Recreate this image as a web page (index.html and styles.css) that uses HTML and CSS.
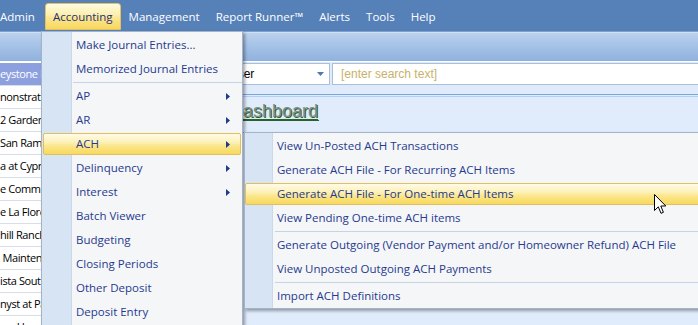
FILE: index.html
```html
<!DOCTYPE html>
<html>
<head>
<meta charset="utf-8">
<link rel="stylesheet" href="styles.css">
</head>
<body>
<div class="app">
  <nav class="menubar">
    <span class="mi first">Admin</span>
    <span class="mi active">Accounting</span>
    <span class="mi">Management</span>
    <span class="mi">Report Runner™</span>
    <span class="mi">Alerts</span>
    <span class="mi">Tools</span>
    <span class="mi">Help</span>
  </nav>
  <div class="band"></div>
  <div class="main">
    <aside class="list">
      <div class="row sel">eystone Isles</div>
      <div class="row">nonstration</div>
      <div class="row">2 Gardens</div>
      <div class="row">San Ramon</div>
      <div class="row">a at Cypress</div>
      <div class="row">e Community</div>
      <div class="row">e La Floresta</div>
      <div class="row">hill Ranch</div>
      <div class="row">&nbsp;Maintenance</div>
      <div class="row">ista South</div>
      <div class="row">nyst at Park</div>
      <div class="row">ow Homes</div>
    </aside>
    <section class="content">
      <div class="toolbar">
        <div class="combo"><span class="combo-text">User</span><svg class="combo-arrow" width="7" height="4" viewBox="0 0 7 4"><path d="M0 0H7L3.5 4Z"/></svg></div>
        <div class="search">[enter search text]</div>
      </div>
      <div class="dash"><span class="dash-title">Dashboard</span></div>
      <div class="body-area"></div>
    </section>
  </div>

  <div class="dropdown">
    <div class="item">Make Journal Entries...</div>
    <div class="item">Memorized Journal Entries</div>
    <div class="sep"></div>
    <div class="item">AP<svg class="arr" width="4" height="7" viewBox="0 0 4 7"><path d="M0 0L4 3.5L0 7Z"/></svg></div>
    <div class="item">AR<svg class="arr" width="4" height="7" viewBox="0 0 4 7"><path d="M0 0L4 3.5L0 7Z"/></svg></div>
    <div class="item hot">ACH<svg class="arr" width="4" height="7" viewBox="0 0 4 7"><path d="M0 0L4 3.5L0 7Z"/></svg></div>
    <div class="item">Delinquency<svg class="arr" width="4" height="7" viewBox="0 0 4 7"><path d="M0 0L4 3.5L0 7Z"/></svg></div>
    <div class="item">Interest<svg class="arr" width="4" height="7" viewBox="0 0 4 7"><path d="M0 0L4 3.5L0 7Z"/></svg></div>
    <div class="item">Batch Viewer</div>
    <div class="item">Budgeting</div>
    <div class="item">Closing Periods</div>
    <div class="item">Other Deposit</div>
    <div class="item">Deposit Entry</div>
  </div>

  <div class="submenu">
    <div class="item">View Un-Posted ACH Transactions</div>
    <div class="item">Generate ACH File - For Recurring ACH Items</div>
    <div class="item hot">Generate ACH File - For One-time ACH Items</div>
    <div class="item">View Pending One-time ACH items</div>
    <div class="sep"></div>
    <div class="item">Generate Outgoing (Vendor Payment and/or Homeowner Refund) ACH File</div>
    <div class="item">View Unposted Outgoing ACH Payments</div>
    <div class="sep"></div>
    <div class="item">Import ACH Definitions</div>
  </div>

  <svg class="cursor" width="13" height="21" viewBox="0 0 13 21"><path d="M0.5 0.5V16.5L4.3 12.8L7 19.3L9.4 18.3L6.8 12H11.8Z" fill="#fff" stroke="#000" stroke-width="1" stroke-linejoin="miter"/></svg>
</div>
</body>
</html>
```

FILE: styles.css
```css
* { box-sizing: border-box; }
html, body { margin: 0; padding: 0; }
body {
  width: 698px;
  height: 325px;
  overflow: hidden;
  font-family: "Open Sans", "Noto Sans", sans-serif;
  font-size: 11.5px;
  background: #e0ecfc;
}
.app {
  position: relative;
  width: 698px;
  height: 325px;
  overflow: hidden;
}
.menubar {
  height: 32px;
  background: #5680b8;
  display: flex;
  align-items: flex-start;
  border-bottom: 1px solid #7fa0cc;
}
.mi {
  margin-top: 3px;
  height: 27px;
  line-height: 25px;
  padding: 0 7px;
  color: #fff;
  border: 1px solid transparent;
  white-space: nowrap;
}
.mi.first { padding-left: 0; padding-right: 9px; border-left: 0; }
.mi.active {
  color: #1e2f7c;
  border-color: #e4c05e;
  border-radius: 3px 3px 0 0;
  background: linear-gradient(to bottom, #fefadf 0%, #fdf0b2 40%, #fae48a 60%, #f7d75c 100%);
}
.band {
  height: 28px;
  background: linear-gradient(to bottom, #bcd2ee 0%, #a8c4e8 40%, #92b3de 100%);
  border-top: 1px solid #cfe0f5;
}
.main {
  display: flex;
  height: 265px;
}
.list {
  width: 229px;
  flex: none;
  background: #fff;
  border-top: 1px solid #8eb2e0;
  padding-top: 2px;
}
.row {
  height: 23px;
  line-height: 22px;
  border-bottom: 1px solid #d8dee8;
  white-space: nowrap;
  overflow: hidden;
  color: #000;
  font-size: 11px;
  letter-spacing: -0.4px;
}
.row.sel { background: #8c9fdf; color: #fff; }
.content {
  flex: 1;
  display: flex;
  flex-direction: column;
  min-width: 0;
}
.toolbar {
  height: 34px;
  border-top: 1px solid #8eb2e0;
  background: linear-gradient(to bottom, #ffffff 0 1px, #dfeafa 1px);
  padding: 2px 0 0 1px;
  display: flex;
  gap: 2px;
}
.combo, .search {
  height: 22px;
  background: #fff;
  border: 1px solid #a9c0dc;
  font-family: "Liberation Sans", Arial, sans-serif;
  font-size: 12px;
  line-height: 20px;
}
.combo {
  width: 100px;
  flex: none;
  display: flex;
  align-items: center;
  padding-left: 0;
}
.combo-text { flex: 1; color: #000; margin-left: -2px; }
.combo-arrow { fill: #4f76b5; margin-right: 5px; }
.search {
  flex: 1;
  color: #c8b26a;
  padding-left: 8px;
  border-right: 0;
}
.dash {
  height: 38px;
  border-top: 1px solid #7aa6e0;
  background: linear-gradient(to bottom, #e0ecfc 0 1px, #b0d0f0 1px 2px, #e0ecfc 2px);
  padding: 5px 0 0 1px;
}
.dash-title {
  font-family: "Liberation Sans", Arial, sans-serif;
  font-size: 18px;
  line-height: 22px;
  color: #7f8f84;
  text-shadow: 1px 1px 0 #2e5e30;
  text-decoration: underline;
  text-decoration-color: #1e6a20;
  text-underline-offset: 2px;
}
.body-area {
  flex: 1;
  border-top: 1px solid #6fa0e0;
  background: #e0ecfc;
}

/* menus */
.dropdown, .submenu {
  position: absolute;
  display: flex;
  flex-direction: column;
  border: 1px solid #a3b4ca;
  box-shadow: 2px 2px 3px rgba(0,0,0,0.35);
  color: #263a8e;
}
.dropdown {
  left: 41px;
  top: 31px;
  width: 202px;
  height: 300px;
  padding-top: 1px;
  background: linear-gradient(to right, #d6e4f3 0 29px, #c9d8ea 29px 30px, #f5f6f8 30px);
}
.submenu {
  left: 244px;
  top: 132px;
  width: 470px;
  padding-top: 1px;
  background: linear-gradient(to right, #d6e4f3 0 27px, #c9d8ea 27px 28px, #f5f6f8 28px);
}
.item {
  position: relative;
  flex: none;
  height: 22px;
  margin: 1px 1px;
  line-height: 20px;
  border: 1px solid transparent;
  border-radius: 2px;
  padding-left: 32px;
  white-space: nowrap;
}
.submenu .item { padding-left: 31px; margin-left: 0; }
.item.hot {
  border-color: #e2bf5e;
  background: linear-gradient(to bottom, #fffbe8 0%, #fdf1b9 40%, #fbe68c 60%, #f7d95c 100%);
}
.arr {
  position: absolute;
  right: 10px;
  top: 7px;
  fill: #1c3b8c;
}
.sep {
  flex: none;
  height: 3px;
  margin-left: 31px;
  background: linear-gradient(to bottom, transparent 0 1px, #c5d3e4 1px 2px, transparent 2px);
}
.submenu .sep { margin-left: 30px; }
.cursor {
  position: absolute;
  left: 654px;
  top: 194px;
}
```
